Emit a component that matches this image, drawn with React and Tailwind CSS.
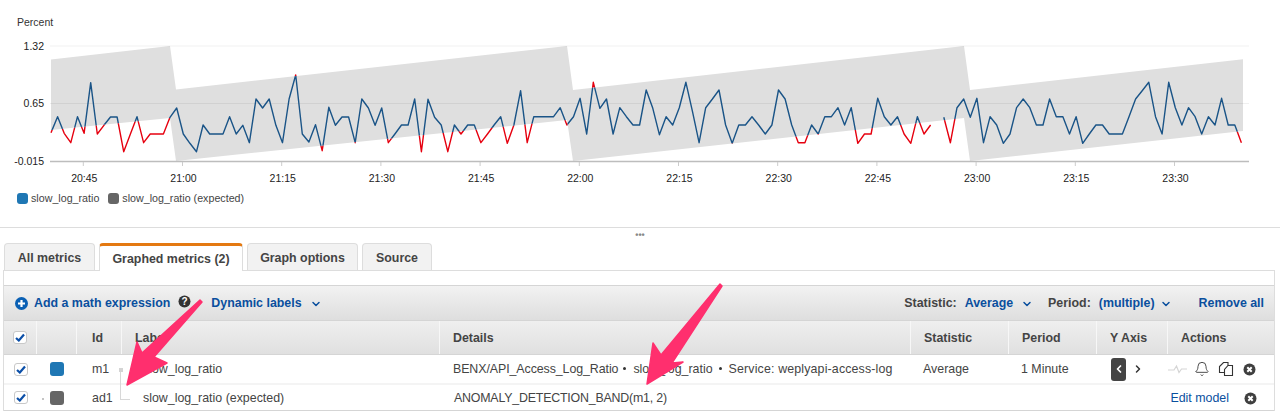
import React from "react";
import { Bell, ChevronDown, ChevronLeft, ChevronRight } from "lucide-react";

const ys1 = [398,350,400,428,350,400,248,402,376,351,351,455,402,350,428,402,402,402,352,324,402,430,455,375,402,402,402,350,402,376,428,297,324,297,376,428,297,225,402,426,374,452,322,376,351,351,428,297,324,376,324,428,402,375,375,297].map((v) => v / 3);
const ys2 = [365,208,262,285,365,285,312,285,285,338,312,285,260,340,285,182,338,260,260,260,260,233,285,260,205,312,157,235,207,312,233,260,285,285,180,235,314,260,285,233,157,245,338,233,207,180,285,340,285,285,260,285,312,285,180,207,285,338,338,285,312,260,260,233,285].map((v) => 30 + v / 3);
const ys3 = [233,340,312,312,205,260,285,260,312,340,260,312,285].map((v) => 30 + v / 3);
const ys4 = [262,338,233,207,262,205,338,260,285,340,312,233,207,233,285,285,207,260,260,312,260,340,312,285,285,312,312,312,260,207,182,157,260,312,157,233,285,233,260,312,260,285,205,285,285,338].map((v) => 30 + v / 3);

const px = (i) => 51 + 6.6135 * i;
const first = [...ys1, ...ys2, ...ys3].map((y, i) => `${px(i).toFixed(1)},${y.toFixed(1)}`).join(" ");
const second = ys4.map((y, i) => `${px(i + 135).toFixed(1)},${y.toFixed(1)}`).join(" ");
const band = "51,59.5 170,46 176,89.5 567,46 573,90 964,46 970,90 1243,59.3 1243,131 970,161 964,118 573,161 567,120 176,161 170,118 51,130";
const bandPath = "M" + band.split(" ").join(" L") + " Z";
const ticks = ["20:45","21:00","21:15","21:30","21:45","22:00","22:15","22:30","22:45","23:00","23:15","23:30"];

function Chart() {
  return (
    <svg width="1280" height="186" className="block" style={{ fontFamily: '"Liberation Sans", sans-serif' }}>
      <defs>
        <clipPath id="bandClip"><polygon points={band} /></clipPath>
        <clipPath id="outClip"><path clipRule="evenodd" d={`M0 0 H1280 V186 H0 Z ${bandPath}`} /></clipPath>
      </defs>
      <text x="17" y="26" fontSize="10.5" fill="#333">Percent</text>
      <polygon points={band} fill="#dfdfdf" />
      <line x1="50" x2="1249" y1="46" y2="46" stroke="#000" strokeOpacity="0.06" />
      <line x1="50" x2="1249" y1="103.5" y2="103.5" stroke="#000" strokeOpacity="0.06" />
      <line x1="50" x2="1249" y1="161.5" y2="161.5" stroke="#bdbdbd" strokeWidth="1.5" />
      <text x="44" y="50" fontSize="10.5" fill="#222" textAnchor="end">1.32</text>
      <text x="44" y="107" fontSize="10.5" fill="#222" textAnchor="end">0.65</text>
      <text x="44" y="165" fontSize="10.5" fill="#222" textAnchor="end">-0.015</text>
      {ticks.map((t, i) => {
        const x = 83.3 + 99.2 * i;
        return (
          <g key={t}>
            <line x1={x} x2={x} y1="162" y2="166" stroke="#ccc" />
            <text x={x + 1} y="182" fontSize="10.5" fill="#222" textAnchor="middle">{t}</text>
          </g>
        );
      })}
      <g fill="none" stroke="#e6000f" strokeWidth="1.4" strokeLinejoin="round" clipPath="url(#outClip)">
        <polyline points={first} />
        <polyline points={second} />
      </g>
      <g fill="none" stroke="#1a5487" strokeWidth="1.4" strokeLinejoin="round" clipPath="url(#bandClip)">
        <polyline points={first} />
        <polyline points={second} />
      </g>
    </svg>
  );
}

function Check() {
  return (
    <span className="flex h-[13px] w-[14px] items-center justify-center rounded-[3px] border border-[#c8c8c8] bg-white">
      <svg width="10" height="9" viewBox="0 0 10 9"><path d="M1 5 L3.8 7.5 L9 1.5" fill="none" stroke="#0b4fa8" strokeWidth="2.2" /></svg>
    </span>
  );
}

function CloseDot() {
  return (
    <svg width="13" height="13" viewBox="0 0 13 13">
      <circle cx="6.5" cy="6.5" r="6" fill="#3f3f3f" />
      <path d="M4.3 4.3 L8.7 8.7 M8.7 4.3 L4.3 8.7" stroke="#fff" strokeWidth="2" />
    </svg>
  );
}

const Down = () => <ChevronDown size={12} strokeWidth={3} className="text-[#0a4f9e]" />;

function Tab({ w, active, children }) {
  return active ? (
    <div className={`${w} -mb-px flex h-[28px] items-center justify-center rounded-t-[4px] border-x border-t-[3px] border-x-[#ddd] border-t-[#e47911] bg-white pt-[1px] text-[12.4px] font-bold text-[#444]`}>{children}</div>
  ) : (
    <div className={`${w} flex h-[27px] items-center justify-center rounded-t-[4px] border-x border-t border-[#ddd] bg-[#f2f2f2] pt-[3px] text-[12.4px] font-bold text-[#444]`}>{children}</div>
  );
}

const cols = "grid grid-cols-[33px_40px_45px_318px_471px_98px_88px_71px_106px]";

function Head({ children, last }) {
  return <div className={`flex items-center pl-[13px] pt-[2px] ${last ? "" : "border-r border-[#f7f7f7]"}`}>{children}</div>;
}

const Dot = ({ className }) => <span className={`mb-[3px] h-[3px] w-[3px] rounded-full bg-[#333] ${className}`} />;

function Metrics() {
  return (
    <div className="mx-[3px] w-[1272px] border-x border-[#ddd] text-[12.4px] text-[#444]">
      <div className="h-[14px]" />
      <div className="flex h-[36px] items-center border-y border-[#d5d5d5] bg-gradient-to-b from-[#f2f2f2] to-[#dedede] pt-[1px] font-bold">
        <svg width="13" height="13" viewBox="0 0 13 13" className="ml-[11px]">
          <circle cx="6.5" cy="6.5" r="6.5" fill="#0a60b4" />
          <path d="M6.5 3 V10 M3 6.5 H10" stroke="#fff" strokeWidth="2.2" />
        </svg>
        <span className="ml-[6px] text-[#0a4f9e]">Add a math expression</span>
        <svg width="13" height="13" viewBox="0 0 13 13" className="mb-[5px] ml-[8px]">
          <circle cx="6.5" cy="6.5" r="6" fill="#333" />
          <text x="6.5" y="10" fontSize="10" fontWeight="700" fill="#fff" textAnchor="middle">?</text>
        </svg>
        <span className="ml-[20px] text-[#0a4f9e]">Dynamic labels</span>
        <span className="ml-[8px]"><Down /></span>
        <span className="ml-auto">Statistic:</span>
        <span className="mb-[1px] ml-[8px] text-[#0a4f9e]">Average</span>
        <span className="ml-[8px]"><Down /></span>
        <span className="ml-[15px]">Period:</span>
        <span className="mb-[1px] ml-[8px] text-[#0a4f9e]">(multiple)</span>
        <span className="ml-[5px]"><Down /></span>
        <span className="ml-[27px] mr-[10px] text-[#0a4f9e]">Remove all</span>
      </div>
      <div className={`${cols} h-[34px] border-b border-[#d5d5d5] bg-gradient-to-b from-[#efefef] to-[#e0e0e0] font-bold`}>
        <div className="flex items-center justify-center border-r border-[#f7f7f7]"><Check /></div>
        <div className="border-r border-[#f7f7f7]" />
        <Head><span className="pl-[2px]">Id</span></Head>
        <Head>Label</Head>
        <Head>Details</Head>
        <Head>Statistic</Head>
        <Head>Period</Head>
        <Head>Y Axis</Head>
        <Head last>Actions</Head>
      </div>
      <div className={`${cols} h-[30px] border-b-2 border-[#f4f4f4]`}>
        <div className="flex items-center justify-center"><Check /></div>
        <div className="flex items-center justify-center"><span className="h-[14px] w-[14px] rounded-[3px] bg-[#1f77b4]" /></div>
        <div className="flex items-center pl-[15px] pt-[1px]">m1</div>
        <div className="relative flex items-center pl-[21px] pt-[1px]">
          <span className="absolute left-[-3px] top-[13px] h-[4px] w-[4px] bg-[#d4d4d4]" />
          slow_log_ratio
        </div>
        <div className="flex items-center pl-[13px] pt-[1px]">
          <span className="tracking-[-0.08px]">BENX/API_Access_Log_Ratio</span><Dot className="ml-[5px] mr-[7px]" />slow_log_ratio<Dot className="ml-[6px] mr-[7px]" /><span className="tracking-[0.15px]">Service: weplyapi-access-log</span>
        </div>
        <div className="flex items-center pl-[12px] pt-[1px]">Average</div>
        <div className="flex items-center pl-[12px] pt-[1px]">1 Minute</div>
        <div className="flex items-center pl-[14px]">
          <span className="flex h-[23px] w-[15px] items-center justify-center rounded-[3px] bg-[#444]"><ChevronLeft size={12} strokeWidth={3.5} className="text-white" /></span>
          <ChevronRight size={12} strokeWidth={3} className="ml-[6px] text-[#333]" />
        </div>
        <div className="flex items-center">
          <svg width="20" height="10" viewBox="0 0 20 10" className="mr-[6px]"><path d="M0 6 H6 L8.5 2 L11 8.5 L13.5 5 H19" fill="none" stroke="#d5d5d5" strokeWidth="1.2" /></svg>
          <Bell size={16} strokeWidth={1.3} className="mr-[8px] text-[#333]" />
          <svg width="16" height="16" viewBox="0 0 16 16" className="mr-[9px]" fill="none" stroke="#333" strokeWidth="1.1">
            <path d="M6.5 14.5 H14.5 V4.5 H10 L6.5 8.5 Z" />
            <path d="M6 11.5 H1.5 V5.5 L5.5 1.5 H10 V4.5" />
          </svg>
          <CloseDot />
        </div>
      </div>
      <div className={`${cols} h-[26px] border-b border-[#d5d5d5]`}>
        <div className="flex items-center justify-center"><Check /></div>
        <div className="relative flex items-center justify-center">
          <span className="absolute left-[5px] top-[13px] h-[2px] w-[2px] bg-[#c4c4c4]" />
          <span className="h-[14px] w-[14px] rounded-[3px] bg-[#666]" />
        </div>
        <div className="flex items-center pl-[15px] pt-[1px]">ad1</div>
        <div className="relative flex items-center pl-[21px] pt-[1px]">
          <span className="absolute left-[-2px] top-[-13px] h-[28px] w-[10px] border-b border-l border-[#d8d8d8]" />
          slow_log_ratio (expected)
        </div>
        <div className="flex items-center pl-[14px] pt-[1px] tracking-[-0.2px]">ANOMALY_DETECTION_BAND(m1, 2)</div>
        <div /><div /><div />
        <div className="-ml-[70px] flex items-center justify-end pr-[17px] pt-[1px]">
          <span className="mr-[15px] text-[#0a4f9e]">Edit model</span>
          <CloseDot />
        </div>
      </div>
    </div>
  );
}

function Arrows() {
  return (
    <svg width="1280" height="420" className="pointer-events-none absolute left-0 top-0">
      <g fill="#ff2f6e" stroke="#ff2f6e" strokeWidth="1.5" strokeLinejoin="round">
        <polygon points="200,300 202,302 154,357 167,363 127,385 137,342 142,353" />
        <polygon points="720,284 722,286 672,363 683,362 647,384 653,343 661,355" />
      </g>
    </svg>
  );
}

export default function App() {
  return (
    <div className="relative h-[420px] w-[1280px] overflow-hidden bg-white" style={{ fontFamily: '"Liberation Sans", Arial, sans-serif' }}>
      <div className="h-[228px] border-b border-[#ddd]">
        <Chart />
        <div className="mt-[6px] flex items-center pl-[17px] text-[10.7px] leading-[13px] text-[#444]">
          <span className="h-[11px] w-[11px] rounded-[3px] bg-[#1f77b4]" />
          <span className="ml-[3px]">slow_log_ratio</span>
          <span className="ml-[9px] h-[11px] w-[11px] rounded-[3px] bg-[#666]" />
          <span className="ml-[3px]">slow_log_ratio (expected)</span>
        </div>
      </div>
      <div className="flex h-[15px] items-center justify-center">
        <span className="text-[9px] font-bold leading-none tracking-[0px] text-[#888]">•••</span>
      </div>
      <div className="mx-[3px] flex w-[1272px] gap-[4px] border-b border-[#ddd] pl-[1px] pr-0">
        <Tab w="w-[91px]">All metrics</Tab>
        <Tab w="w-[144px]" active>Graphed metrics (2)</Tab>
        <Tab w="w-[111px]">Graph options</Tab>
        <Tab w="w-[70px]">Source</Tab>
      </div>
      <Metrics />
      <Arrows />
    </div>
  );
}
